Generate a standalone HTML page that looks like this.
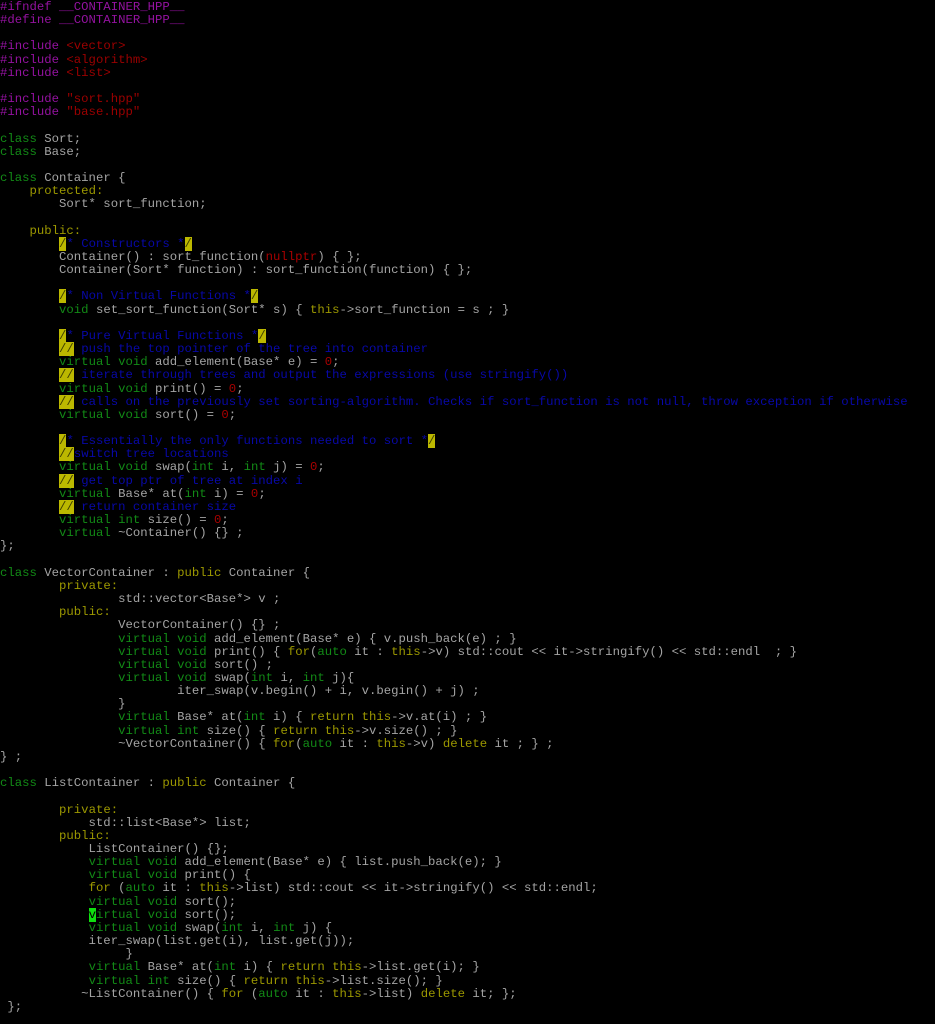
<!DOCTYPE html>
<html><head><meta charset="utf-8"><style>
html,body{margin:0;padding:0;background:#000;width:935px;height:1024px;overflow:hidden}
pre{margin:0;padding:1px 0 0 0;font-family:"Liberation Mono",monospace;font-size:12.3px;line-height:13.15px;color:#a4a4a4;white-space:pre}
.k{color:#128a16}.c{color:#0808a8}.n{color:#a80000}.p{color:#9412a0}.r{color:#9c0000}.y{color:#9c9800}.h{background:#bcb800;color:#404000}.g{background:#10e010;color:#000}
</style></head><body><pre><span class="p">#ifndef __CONTAINER_HPP__</span>
<span class="p">#define __CONTAINER_HPP__</span>

<span class="p">#include </span><span class="r">&lt;vector&gt;</span>
<span class="p">#include </span><span class="r">&lt;algorithm&gt;</span>
<span class="p">#include </span><span class="r">&lt;list&gt;</span>

<span class="p">#include </span><span class="r">"sort.hpp"</span>
<span class="p">#include </span><span class="r">"base.hpp"</span>

<span class="k">class</span> Sort;
<span class="k">class</span> Base;

<span class="k">class</span> Container {
    <span class="y">protected:</span>
        Sort* sort_function;

    <span class="y">public:</span>
        <span class="h">/</span><span class="c">* Constructors *</span><span class="h">/</span>
        Container() : sort_function(<span class="n">nullptr</span>) { };
        Container(Sort* function) : sort_function(function) { };

        <span class="h">/</span><span class="c">* Non Virtual Functions *</span><span class="h">/</span>
        <span class="k">void</span> set_sort_function(Sort* s) { <span class="y">this</span>-&gt;sort_function = s ; }

        <span class="h">/</span><span class="c">* Pure Virtual Functions *</span><span class="h">/</span>
        <span class="h">//</span><span class="c"> push the top pointer of the tree into container</span>
        <span class="k">virtual void</span> add_element(Base* e) = <span class="n">0</span>;
        <span class="h">//</span><span class="c"> iterate through trees and output the expressions (use stringify())</span>
        <span class="k">virtual void</span> print() = <span class="n">0</span>;
        <span class="h">//</span><span class="c"> calls on the previously set sorting-algorithm. Checks if sort_function is not null, throw exception if otherwise</span>
        <span class="k">virtual void</span> sort() = <span class="n">0</span>;

        <span class="h">/</span><span class="c">* Essentially the only functions needed to sort *</span><span class="h">/</span>
        <span class="h">//</span><span class="c">switch tree locations</span>
        <span class="k">virtual void</span> swap(<span class="k">int</span> i, <span class="k">int</span> j) = <span class="n">0</span>;
        <span class="h">//</span><span class="c"> get top ptr of tree at index i</span>
        <span class="k">virtual</span> Base* at(<span class="k">int</span> i) = <span class="n">0</span>;
        <span class="h">//</span><span class="c"> return container size</span>
        <span class="k">virtual int</span> size() = <span class="n">0</span>;
        <span class="k">virtual</span> ~Container() {} ;
};

<span class="k">class</span> VectorContainer : <span class="y">public</span> Container {
        <span class="y">private:</span>
                std::vector&lt;Base*&gt; v ;
        <span class="y">public:</span>
                VectorContainer() {} ;
                <span class="k">virtual void</span> add_element(Base* e) { v.push_back(e) ; }
                <span class="k">virtual void</span> print() { <span class="y">for</span>(<span class="k">auto</span> it : <span class="y">this</span>-&gt;v) std::cout &lt;&lt; it-&gt;stringify() &lt;&lt; std::endl  ; }
                <span class="k">virtual void</span> sort() ;
                <span class="k">virtual void</span> swap(<span class="k">int</span> i, <span class="k">int</span> j){
                        iter_swap(v.begin() + i, v.begin() + j) ;
                }
                <span class="k">virtual</span> Base* at(<span class="k">int</span> i) { <span class="y">return this</span>-&gt;v.at(i) ; }
                <span class="k">virtual int</span> size() { <span class="y">return this</span>-&gt;v.size() ; }
                ~VectorContainer() { <span class="y">for</span>(<span class="k">auto</span> it : <span class="y">this</span>-&gt;v) <span class="y">delete</span> it ; } ;
} ;

<span class="k">class</span> ListContainer : <span class="y">public</span> Container {

        <span class="y">private:</span>
            std::list&lt;Base*&gt; list;
        <span class="y">public:</span>
            ListContainer() {};
            <span class="k">virtual void</span> add_element(Base* e) { list.push_back(e); }
            <span class="k">virtual void</span> print() {
            <span class="y">for</span> (<span class="k">auto</span> it : <span class="y">this</span>-&gt;list) std::cout &lt;&lt; it-&gt;stringify() &lt;&lt; std::endl;
            <span class="k">virtual void</span> sort();
            <span class="g">v</span><span class="k">irtual void</span> sort();
            <span class="k">virtual void</span> swap(<span class="k">int</span> i, <span class="k">int</span> j) {
            iter_swap(list.get(i), list.get(j));
                 }
            <span class="k">virtual</span> Base* at(<span class="k">int</span> i) { <span class="y">return this</span>-&gt;list.get(i); }
            <span class="k">virtual int</span> size() { <span class="y">return this</span>-&gt;list.size(); }
           ~ListContainer() { <span class="y">for</span> (<span class="k">auto</span> it : <span class="y">this</span>-&gt;list) <span class="y">delete</span> it; };
 };</pre></body></html>
